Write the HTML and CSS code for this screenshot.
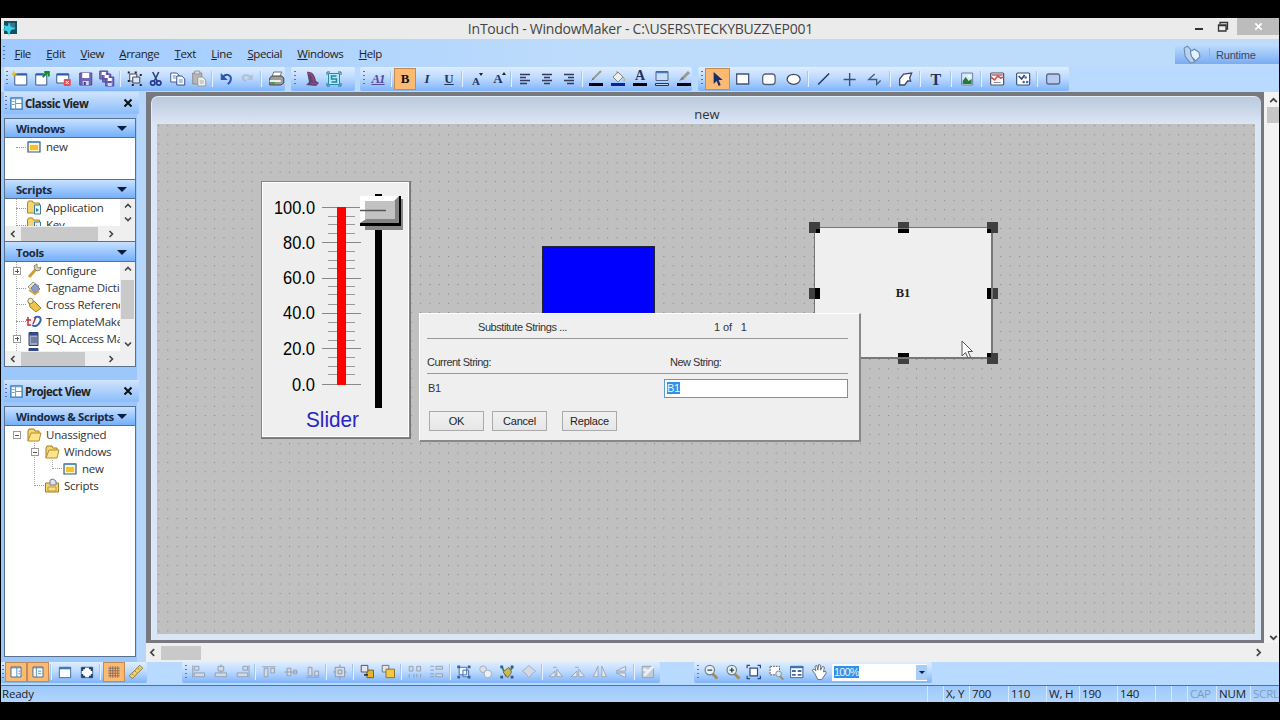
FILE: index.html
```
<!DOCTYPE html>
<html lang="en">
<head>
    <meta charset="UTF-8">
    <meta name="viewport" content="width=device-width, initial-scale=1.0">
    <title>InTouch - WindowMaker</title>
    <link rel="stylesheet" href="styles.css">
</head>
<body>
    <!-- icon set -->
    <svg class="sprite">
        <symbol id="win-new" viewBox="0 0 18 18"><path d="M3 4h12v11H3z" fill="#fff" stroke="#385a8c"/><path d="M3 4.500h12" stroke="#2a5ea8" stroke-width="2"/><path d="M2 0l1 3 3 1-3 1-1 3-1-3-2-1 2-1z" fill="#f0c020"/></symbol>
        <symbol id="win-open" viewBox="0 0 18 18"><path d="M2 4h11v11H2z" fill="#fff" stroke="#385a8c"/><path d="M2 4.500h8" stroke="#2a5ea8" stroke-width="2"/><path d="M9 7l5-5M10.500 2H15v4.500" fill="none" stroke="#188a28" stroke-width="2"/></symbol>
        <symbol id="win-close" viewBox="0 0 18 18"><path d="M2 4h12v9H2z" fill="#fff" stroke="#385a8c"/><path d="M2 4.500h12" stroke="#2a5ea8" stroke-width="2"/><rect x="9" y="9" width="7" height="7" rx="1" fill="#e0505a"/><path d="M11 11l3 3m0-3l-3 3" stroke="#fff"/></symbol>
        <symbol id="save" viewBox="0 0 18 18"><path d="M3 3h12v12H3z" fill="#7168b4" stroke="#4c4496"/><path d="M5.500 3h7v5h-7z" fill="#fff"/><path d="M6 11h6v4H6z" fill="#d4d4ee"/><path d="M7 12h2v3H7z" fill="#3b3484"/></symbol>
        <symbol id="save-all" viewBox="0 0 18 18"><g fill="#8078bc" stroke="#4c4496"><path d="M2 1h8v8H2zM5 4h8v8H5zM8 7h8v9H8z"/></g><path d="M4 2h4v3H4zM7 5h4v3H7zM10 8h4v3h-4z" fill="#fff"/><path d="M10 13h4v3h-4z" fill="#d8d4f2"/></symbol>
        <symbol id="duplicate" viewBox="0 0 18 18"><path d="M4 4h7v7H4z" fill="#fff" stroke="#445"/><path d="M7 7h7v6H7z" fill="#dce8fa" stroke="#445"/><path d="M2 2.500h2M9 2.500h2M2 11h2M14 5h2M6 15h2M14 15h2" stroke="#223" stroke-width="2"/></symbol>
        <symbol id="cut" viewBox="0 0 18 18"><path d="M6 2l5 10M12 2L7 12" stroke="#26407c" stroke-width="1.600"/><circle cx="6" cy="13" r="2.200" fill="none" stroke="#263c90" stroke-width="1.700"/><circle cx="12" cy="13" r="2.200" fill="none" stroke="#263c90" stroke-width="1.700"/></symbol>
        <symbol id="copy" viewBox="0 0 18 18"><path d="M2 3h6l2 2v7H2z" fill="#fff" stroke="#445c9c"/><path d="M8 6h5l3 3v6H8z" fill="#fff" stroke="#304c90"/><path d="M4 6h3M4 8h3M10 10h4M10 12h4" stroke="#6382bd"/></symbol>
        <symbol id="paste" viewBox="0 0 18 18"><path d="M3 3h9v11H3z" fill="#b8b7b8" stroke="#8c8b8c"/><path d="M5 1h5v3H5z" fill="#ddd" stroke="#999"/><path d="M8 7h5l3 3v6H8z" fill="#eee" stroke="#999"/><path d="M10 11h4M10 13h4" stroke="#aaa"/></symbol>
        <symbol id="undo" viewBox="0 0 18 18"><path d="M5 7c4-4 9-2 8 3-.4 2-1 3-3 4" fill="none" stroke="#2a58b0" stroke-width="2"/><path d="M3 3v7h7z" fill="#2a58b0"/></symbol>
        <symbol id="redo" viewBox="0 0 18 18"><path d="M12 7C8 4 4 5 4 8c.4 2 2 3 4 3" fill="none" stroke="#b3bfcf" stroke-width="2"/><path d="M14 4v6H8z" fill="#b3bfcf"/></symbol>
        <symbol id="print" viewBox="0 0 18 18"><path d="M5 7l2-5h8l-2 5z" fill="#fff" stroke="#777"/><path d="M3 8l2-2h10l2 2v5l-3 2H3z" fill="#9a9d98" stroke="#444"/><path d="M3 11h11" stroke="#eee" stroke-width="2"/><path d="M4 13h4" stroke="#40a040" stroke-width="2"/></symbol>
        <symbol id="wizard" viewBox="0 0 18 18"><path d="M4 2c5-1 8 3 9 9l3 2-3 3-10-1 3-3z" fill="#5b4578"/><path d="M5 3c4 0 5 4 6 9M8 13l6 1" stroke="#a84068" stroke-width="1.600" fill="none"/></symbol>
        <symbol id="symbol-s" viewBox="0 0 18 18"><path d="M3.500 3.500h11v11h-11z" fill="#b8e7f6" stroke="#268ba9"/><path d="M2 5V2h3M13 2h3v3M2 13v3h3M13 16h3v-3" fill="none" stroke="#24738e"/><path d="M11.500 6h-5v3h5v3h-5" fill="none" stroke="#2087a5" stroke-width="1.500"/></symbol>
        <symbol id="size-down" viewBox="0 0 18 18"><path d="M12 3h4l-2 3z" fill="#222"/></symbol>
        <symbol id="size-up" viewBox="0 0 18 18"><path d="M13 5l2-3 2 3z" fill="#222"/></symbol>
        <symbol id="al-left" viewBox="0 0 18 18"><path d="M4 4.500h10M4 7.500h6M4 10.500h10M4 13.500h7" stroke="#333b58" stroke-width="1.400"/></symbol>
        <symbol id="al-center" viewBox="0 0 18 18"><path d="M4 4.500h10M6 7.500h6M4 10.500h10M6 13.500h6" stroke="#333b58" stroke-width="1.400"/></symbol>
        <symbol id="al-right" viewBox="0 0 18 18"><path d="M4 4.500h10M8 7.500h6M4 10.500h10M7 13.500h7" stroke="#333b58" stroke-width="1.400"/></symbol>
        <symbol id="line-color" viewBox="0 0 18 18"><path d="M6 9l8-8" stroke="#9a9a92" stroke-width="2"/><path d="M4 11l2-3 1 1z" fill="#555"/><path d="M2 13h14v3H2z" fill="#000"/></symbol>
        <symbol id="fill-color" viewBox="0 0 18 18"><path d="M4 7l5-5 5 5-5 5z" fill="#eee" stroke="#898980"/><path d="M8 4V1M14 7c2 1 1 4 1 4" stroke="#a9a16b" fill="none"/><path d="M2 13h14v3H2z" fill="#0a22a8"/></symbol>
        <symbol id="bar-color" viewBox="0 0 18 18"><path d="M2 13h14v3H2z" fill="#000"/></symbol>
        <symbol id="window-color" viewBox="0 0 18 18"><path d="M3 1.500h12v9H3z" fill="#c7defa" stroke="#4b6387"/><path d="M3 2.500h12" stroke="#4e79b8" stroke-width="1.500"/><path d="M2.500 13.500h13v2h-13z" fill="#c0d4ee" stroke="#333"/></symbol>
        <symbol id="pen-color" viewBox="0 0 18 18"><path d="M7 9l7-7" stroke="#9b9c90" stroke-width="3"/><path d="M4 11l3-4 2 2z" fill="#777c70"/><path d="M2 13h14v3H2z" fill="#000"/></symbol>
        <symbol id="pointer" viewBox="0 0 18 18"><path d="M5 2v12l3-3 2 5 2-1-2-5h4z" fill="#192f69"/></symbol>
        <symbol id="rect" viewBox="0 0 18 18"><path d="M3 4h12v10H3z" fill="#fff" stroke="#455577" stroke-width="1.300"/></symbol>
        <symbol id="rrect" viewBox="0 0 18 18"><rect x="3" y="4" width="12.500" height="10.500" rx="3" fill="#fff" stroke="#586176" stroke-width="1.300"/></symbol>
        <symbol id="ellipse" viewBox="0 0 18 18"><ellipse cx="9" cy="9.300" rx="6.500" ry="5" fill="#fff" stroke="#404b67" stroke-width="1.300"/></symbol>
        <symbol id="line" viewBox="0 0 18 18"><path d="M3.500 14.500l11-11" stroke="#29385a" stroke-width="1.500"/></symbol>
        <symbol id="cross" viewBox="0 0 18 18"><path d="M3 9.500h12M9 3v13" stroke="#385075" stroke-width="1.400"/></symbol>
        <symbol id="polyline" viewBox="0 0 18 18"><path d="M9 4L3 9.500h8v5l4-4" fill="none" stroke="#405a80" stroke-width="1.300"/></symbol>
        <symbol id="polygon" viewBox="0 0 18 18"><path d="M3 9l4-5 8-1-2 5 1 3-3 0-3 4-5 0z" fill="#fff" stroke="#404b67" stroke-width="1.300"/></symbol>
        <symbol id="bitmap" viewBox="0 0 18 18"><path d="M4 3h11v12H4z" fill="#d5e9ff" stroke="#70809a"/><path d="M5 14v-3l3-4 3 4 3-2v5z" fill="#257a37"/><circle cx="11.500" cy="6" r="1.500" fill="#fff"/></symbol>
        <symbol id="trend" viewBox="0 0 18 18"><rect x="3" y="3" width="13" height="12" rx="1" fill="#fff" stroke="#4c5468" stroke-width="1.200"/><path d="M4 5h11" stroke="#b6656a" stroke-width="1.500"/><path d="M3 7l4 3 3-4 3 2 3-1" fill="none" stroke="#d04a50" stroke-width="1.600"/><path d="M6 12.500h7" stroke="#8b91a0"/></symbol>
        <symbol id="hist" viewBox="0 0 18 18"><rect x="3" y="3" width="13" height="12" rx="1" fill="#fff" stroke="#36557c" stroke-width="1.200"/><path d="M5 6l3 3 3-4" fill="none" stroke="#334874" stroke-width="1.700"/><circle cx="12" cy="7.500" r="1.300" fill="#3d6cad"/><circle cx="10" cy="12" r="1.300" fill="#3d6cad"/><circle cx="13.500" cy="12" r="1.300" fill="#3d6cad"/></symbol>
        <symbol id="button" viewBox="0 0 18 18"><rect x="3" y="4" width="13" height="10" rx="2" fill="#b6cbed" stroke="#596c8b" stroke-width="1.300"/></symbol>
        <symbol id="layout-l" viewBox="0 0 18 18"><path d="M3 3h12v12H3z" fill="#fff" stroke="#285b93"/><path d="M3 4h12M10 4v11M12 8h2M12 11h2" stroke="#397ebc"/></symbol>
        <symbol id="layout-h" viewBox="0 0 18 18"><path d="M3 3h12v12H3z" fill="#fff" stroke="#285b93"/><path d="M3 4h12M7 4v11M9 8h4M9 11h4" stroke="#397ebc"/></symbol>
        <symbol id="screen" viewBox="0 0 18 18"><path d="M3 4h12v11H3z" fill="#fff" stroke="#346c9c"/><path d="M3 5h12" stroke="#3874b8" stroke-width="2"/></symbol>
        <symbol id="full" viewBox="0 0 18 18"><path d="M3 4h12v11H3z" fill="#fff" stroke="#346c9c"/><path d="M3 4h4v2H5v2H3zM11 4h4v4h-2V6h-2zM3 11h2v2h2v2H3zM13 11h2v4h-4v-2h2z" fill="#263d63"/></symbol>
        <symbol id="grid" viewBox="0 0 18 18"><path d="M2 4.500h14M2 7.500h14M2 10.500h14M2 13.500h14M4.500 2v14M7.500 2v14M10.500 2v14M13.500 2v14" stroke="#7d6658"/></symbol>
        <symbol id="ruler" viewBox="0 0 18 18"><path d="M2 13L13 2l3 3L5 16z" fill="#eed56c" stroke="#8b7137"/><path d="M5 11l1.500 1.500M8 8l1.500 1.500M11 5l1.500 1.500" stroke="#8b7137"/></symbol>
        <symbol id="a-left" viewBox="0 0 18 18"><path d="M2.500 2v13M4 3h5v4H4zM4 10h11v4H4z" fill="#d4dae4" stroke="#909db2"/></symbol>
        <symbol id="a-center" viewBox="0 0 18 18"><path d="M6 3h6v5H6zM3 10h12v4H3zM9 1v2M9 8v2" fill="#d4dae4" stroke="#909db2"/></symbol>
        <symbol id="a-right" viewBox="0 0 18 18"><path d="M15.500 2v13M9 3h5v4H9zM3 10h11v4H3z" fill="#d4dae4" stroke="#909db2"/></symbol>
        <symbol id="a-top" viewBox="0 0 18 18"><path d="M2 3.500h14M4 5h4v9H4zM11 5h4v5h-4z" fill="#d4dae4" stroke="#909db2"/></symbol>
        <symbol id="a-mid" viewBox="0 0 18 18"><path d="M2 9h14M5 5h4v8H5zM12 7h3v4h-3z" fill="#d4dae4" stroke="#909db2"/></symbol>
        <symbol id="a-bottom" viewBox="0 0 18 18"><path d="M2 14.500h14M4 4h4v9H4zM11 8h4v5h-4z" fill="#d4dae4" stroke="#909db2"/></symbol>
        <symbol id="a-cross" viewBox="0 0 18 18"><path d="M4 4h10v10H4zM9 1v3M9 14v3M2 9h2M14 9h2M7 7h4v4H7z" fill="#d4dae4" stroke="#8995aa"/></symbol>
        <symbol id="send-back" viewBox="0 0 18 18"><path d="M9 7h7v8H9z" fill="#e7b52c" stroke="#725b26"/><path d="M3 2h7v7H3z" fill="#e5e6e9" stroke="#465268"/><path d="M6 12h4" stroke="#333" stroke-width="2"/></symbol>
        <symbol id="bring-front" viewBox="0 0 18 18"><path d="M3 2h7v7H3z" fill="#e5e6e9" stroke="#65738a"/><path d="M7 6h9v9H7z" fill="#f2c846" stroke="#8d6d24"/></symbol>
        <symbol id="space-h" viewBox="0 0 18 18"><path d="M3 3h4v5H3zM11 3h4v5h-4zM3 11v4M8 11v4M11 11v4M15 11v4" fill="#d4dae4" stroke="#909db2"/></symbol>
        <symbol id="space-v" viewBox="0 0 18 18"><path d="M8 3h7v3H8zM8 11h7v3H8zM2 3h4M2 7h4M2 11h4M2 14h4" fill="#d4dae4" stroke="#909db2"/></symbol>
        <symbol id="group" viewBox="0 0 18 18"><path d="M4 4h8v8H4zM8 7h6v7H8z" fill="#f0f7ff" stroke="#416ca8"/><path d="M2 2h3v3H2zM13 2h3v3h-3zM2 13h3v3H2zM13 13h3v3h-3z" fill="#3a639a"/></symbol>
        <symbol id="ungroup" viewBox="0 0 18 18"><circle cx="6" cy="6" r="3.500" fill="#dbe1e9" stroke="#a1acbc"/><circle cx="11" cy="11" r="4" fill="#edf0f4" stroke="#a1acbc"/></symbol>
        <symbol id="cell" viewBox="0 0 18 18"><path d="M4 4l4 9 7-9" fill="none" stroke="#408a46" stroke-width="2"/><path d="M5 9l6-5 3 5-4 6z" fill="#cdb75b" stroke="#6b6d4f"/><path d="M2 2h3v3H2zM13 2h3v3h-3zM2 13h3v3H2zM13 13h3v3h-3z" fill="#3a5686"/></symbol>
        <symbol id="uncell" viewBox="0 0 18 18"><path d="M9 2l3 3 4 3-4 3-3 4-3-4-4-3 4-3z" fill="#d3dae3" stroke="#a1acbc"/></symbol>
        <symbol id="rot-l" viewBox="0 0 18 18"><path d="M2 14h6V8zM10 14V6l6 8zM6 4h4" fill="#e4e8ed" stroke="#98a4b6"/></symbol>
        <symbol id="flip-h" viewBox="0 0 18 18"><path d="M2 14h5V3zM11 14V3l5 11z" fill="#e5e9ed" stroke="#98a4b6"/></symbol>
        <symbol id="flip-v" viewBox="0 0 18 18"><path d="M14 3v5H4zM4 10h10v5z" fill="#e4e8ed" stroke="#98a4b6"/></symbol>
        <symbol id="reshape" viewBox="0 0 18 18"><path d="M3 3h12v12H3z" fill="#c1cbd9" stroke="#93a0b2"/><path d="M5 13L15 3M4 6l5 2" stroke="#edf0f3" stroke-width="3"/></symbol>
        <symbol id="zoom-out" viewBox="0 0 18 18"><path d="M11 11l5 5" stroke="#a48d55" stroke-width="3"/><circle cx="8" cy="7" r="5" fill="#e5f2f7" stroke="#74838b" stroke-width="1.300"/><path d="M5.500 7h5" stroke="#344" stroke-width="1.500"/></symbol>
        <symbol id="zoom-in" viewBox="0 0 18 18"><path d="M11 11l5 5" stroke="#a48d55" stroke-width="3"/><circle cx="8" cy="7" r="5" fill="#e5f2f7" stroke="#74838b" stroke-width="1.300"/><path d="M5.500 7h5M8 4.500v5" stroke="#344" stroke-width="1.500"/></symbol>
        <symbol id="zoom-fit" viewBox="0 0 18 18"><path d="M5 5h8v8H5z" fill="#fff" stroke="#345179" stroke-width="1.300"/><path d="M2 5V2h3M13 2h3v3M2 13v3h3M13 16h3v-3" fill="none" stroke="#2b4c80" stroke-width="1.300"/></symbol>
        <symbol id="zoom-area" viewBox="0 0 18 18"><path d="M3 3h10v9H3z" fill="#fff" stroke="#555" stroke-dasharray="2 1"/><path d="M13 13l4 4" stroke="#a48d55" stroke-width="2"/><circle cx="12" cy="11" r="3" fill="#ddebf2" stroke="#788a94"/></symbol>
        <symbol id="panes" viewBox="0 0 18 18"><path d="M2.500 3h13v12h-13z" fill="#fff" stroke="#3f5b85"/><path d="M2 4h14" stroke="#3874b8" stroke-width="2"/><path d="M4 7h4v2H4zM10 7h4v2h-4zM4 11h4v2H4zM10 11h4v2h-4z" fill="#476ba1"/></symbol>
        <symbol id="hand" viewBox="0 0 18 18"><path d="M5 11L2 7l2-1 2 2-1-5 2-1 1 5 1-6 2 1v5l2-4 2 1-1 5 2-1 1 2-5 7H8z" fill="#fff" stroke="#686b71"/></symbol>
        <symbol id="folder" viewBox="0 0 16 16"><path d="M2 14V4l1-2h5l1 2h4v3" fill="#f4d66b" stroke="#a27b29"/><path d="M2 14l3-8h10l-2 8z" fill="#ffe58b" stroke="#b68a30"/></symbol>
        <symbol id="folder-s" viewBox="0 0 16 16"><path d="M1.500 5h13v9h-13z" fill="#f5d66c" stroke="#a27b29"/><path d="M6 5V2l3-1 3 2v4H6z" fill="#dce1f0" stroke="#7a7c90"/><path d="M4 9h8v4H4z" fill="#f6df87" stroke="#c39a3e"/></symbol>
        <symbol id="folder-app" viewBox="0 0 16 16"><path d="M1.500 3l1-2h4l1 2h6v10h-12z" fill="#f3d66f" stroke="#a98337"/><path d="M8.500 5h6v9h-6z" fill="#e8f6fb" stroke="#38799c"/><path d="M10 8l3 2-3 2z" fill="#2383a1"/></symbol>
        <symbol id="yellow-win" viewBox="0 0 16 16"><path d="M2 3h12v10H2z" fill="#fff4c6" stroke="#345b89" stroke-width="1.200"/><path d="M4 6h8v5H4z" fill="#f3c22c"/><path d="M2 3h12" stroke="#4a8bc6" stroke-width="1.500"/></symbol>
        <symbol id="wrench" viewBox="0 0 16 16"><path d="M3 14L11 5" stroke="#d19e31" stroke-width="3"/><path d="M9 6l-1-3 3-2v3l2 1 2-1-1 3-3 1z" fill="#ddd6bb" stroke="#8d8874"/></symbol>
        <symbol id="tags" viewBox="0 0 16 16"><path d="M2 7l5-5 6 4-5 6z" fill="#eee4a8" stroke="#9a9ba1"/><path d="M5 8l4-4 5 5-5 4z" fill="#8c9dcc" stroke="#747da5"/><path d="M3 10l6 4 4-3" fill="none" stroke="#d0a43d" stroke-width="2"/></symbol>
        <symbol id="crossref" viewBox="0 0 16 16"><path d="M3 6l5-2 7 7-5 4-6-5z" fill="#efc44a" stroke="#a37b26"/><circle cx="4.500" cy="4" r="2.700" fill="#f4efbf" stroke="#888556"/></symbol>
        <symbol id="template" viewBox="0 0 16 16"><path d="M8 4c5-3 8 0 6 4s-5 5-8 3" fill="none" stroke="#3665b8" stroke-width="2"/><path d="M2 3v8h3M0 6h5M10 3L7 10" fill="none" stroke="#c72c37" stroke-width="1.500"/></symbol>
        <symbol id="sql" viewBox="0 0 16 16"><path d="M3 1.500h9v13H3z" fill="#9ba8c7" stroke="#34405e"/><path d="M3 3h9" stroke="#304a95" stroke-width="3"/><path d="M5 7h6M5 9h6M5 11h6" stroke="#465575"/></symbol>
        <symbol id="project" viewBox="0 0 16 16"><path d="M2 2h12v12H2z" fill="#fff" stroke="#347ab8" stroke-width="1.400"/><path d="M2 3h12M7 3v11M7 8h7M3 6h3M3 9h3" stroke="#5799d0"/></symbol>
        <symbol id="runtime" viewBox="0 0 18 18"><path d="M2 3l3-2 3 3 1 6 3 6-4 1-5-6z" fill="#b5d2f2" stroke="#6f88ad"/><path d="M8 6l4-2 4 3 1 4-4 4-4-4z" fill="#e3f0ff" stroke="#6a84aa"/></symbol>
        <symbol id="up" viewBox="0 0 10 10"><path d="M2 6.500l3-3 3 3" fill="none" stroke="#444" stroke-width="1.600"/></symbol>
        <symbol id="down" viewBox="0 0 10 10"><path d="M2 3.500l3 3 3-3" fill="none" stroke="#444" stroke-width="1.600"/></symbol>
        <symbol id="left" viewBox="0 0 10 10"><path d="M6.500 2l-3 3 3 3" fill="none" stroke="#444" stroke-width="1.600"/></symbol>
        <symbol id="right" viewBox="0 0 10 10"><path d="M3.500 2l3 3-3 3" fill="none" stroke="#444" stroke-width="1.600"/></symbol>
        <symbol id="close" viewBox="0 0 10 10"><path d="M1.500 1.500l7 7m0-7l-7 7" stroke="currentColor" stroke-width="2"/></symbol>
    </svg>

    <div class="app">
        <header class="titlebar">
            <svg class="app-icon" viewBox="0 0 16 16"><path d="M2 1h13v13H2z" fill="#174e60"/><path d="M6 3h7v7H6z" fill="#35788a"/><path d="M1 5l5 1 1-4 2 5 5 1-5 2-2 6-2-5-5-1 3-2z" fill="#39d1e6"/></svg>
            <h1>InTouch - WindowMaker - C:\USERS\TECKYBUZZ\EP001</h1>
            <div class="win-buttons">
                <span class="minimize"></span>
                <svg class="restore" viewBox="0 0 12 12"><path d="M3 3V1.500h7.500V8H9M1.500 4H9v6H1.500zM1.500 4.500H9" fill="none" stroke="#333" stroke-width="1.300"/></svg>
                <span class="win-close"><svg width="9" height="9"><use href="#close"/></svg></span>
            </div>
        </header>

        <div class="menu-row">
            <nav class="menu">
                <i class="grip"></i>
                <span><u>F</u>ile</span><span><u>E</u>dit</span><span><u>V</u>iew</span><span><u>A</u>rrange</span><span><u>T</u>ext</span><span><u>L</u>ine</span><span><u>S</u>pecial</span><span><u>W</u>indows</span><span><u>H</u>elp</span>
            </nav>
            <div class="runtime"><svg width="19" height="19"><use href="#runtime"/></svg><b></b><span>Runtime</span></div>
        </div>

        <div class="tool-row">
            <div class="bar bar-file">
                <i class="grip"></i>
                <svg><use href="#win-new"/></svg><svg><use href="#win-open"/></svg><svg><use href="#win-close"/></svg><svg><use href="#save"/></svg><svg><use href="#save-all"/></svg>
                <i class="sep"></i>
                <svg><use href="#duplicate"/></svg><svg><use href="#cut"/></svg><svg><use href="#copy"/></svg><svg><use href="#paste"/></svg>
                <i class="sep"></i>
                <svg><use href="#undo"/></svg><svg><use href="#redo"/></svg>
                <i class="sep"></i>
                <svg><use href="#print"/></svg>
            </div>
            <div class="bar bar-wizard">
                <i class="grip"></i>
                <svg><use href="#wizard"/></svg><svg><use href="#symbol-s"/></svg>
            </div>
            <div class="bar bar-format">
                <i class="grip"></i>
                <span class="letter font-btn">A1</span>
                <i class="sep"></i>
                <span class="letter active">B</span><span class="letter italic">I</span><span class="letter underline">U</span>
                <i class="sep"></i>
                <span class="letter small">A<svg><use href="#size-down"/></svg></span><span class="letter big">A<svg><use href="#size-up"/></svg></span>
                <i class="sep"></i>
                <svg><use href="#al-left"/></svg><svg><use href="#al-center"/></svg><svg><use href="#al-right"/></svg>
                <i class="sep"></i>
                <svg><use href="#line-color"/></svg><svg><use href="#fill-color"/></svg><span class="letter text-color">A<svg><use href="#bar-color"/></svg></span><svg><use href="#window-color"/></svg><svg><use href="#pen-color"/></svg>
            </div>
            <div class="bar bar-draw">
                <i class="grip"></i>
                <svg class="active"><use href="#pointer"/></svg><svg><use href="#rect"/></svg><svg><use href="#rrect"/></svg><svg><use href="#ellipse"/></svg>
                <i class="sep"></i>
                <svg><use href="#line"/></svg><svg><use href="#cross"/></svg><svg><use href="#polyline"/></svg>
                <i class="sep"></i>
                <svg><use href="#polygon"/></svg>
                <i class="sep"></i>
                <span class="letter text-tool">T</span>
                <i class="sep"></i>
                <svg><use href="#bitmap"/></svg>
                <i class="sep"></i>
                <svg><use href="#trend"/></svg><svg><use href="#hist"/></svg>
                <i class="sep"></i>
                <svg><use href="#button"/></svg>
            </div>
        </div>

        <main class="workspace">
            <aside class="sidebar">
                <div class="pane-title"><i class="grip"></i><svg><use href="#project"/></svg><h2>Classic View</h2><svg class="x"><use href="#close"/></svg></div>
                <section class="pane pane-windows">
                    <h3>Windows<i class="caret"></i></h3>
                    <ul class="tree">
                        <li><i class="dots"></i><svg><use href="#yellow-win"/></svg>new</li>
                    </ul>
                </section>
                <section class="pane pane-scripts">
                    <h3>Scripts<i class="caret"></i></h3>
                    <div class="pane-body">
                        <ul class="tree lined">
                            <li><i class="dots"></i><svg><use href="#folder-app"/></svg>Application</li>
                            <li><i class="dots"></i><svg><use href="#folder-app"/></svg>Key</li>
                        </ul>
                        <div class="vscroll"><svg><use href="#up"/></svg><svg><use href="#down"/></svg></div>
                    </div>
                    <div class="hscroll"><svg><use href="#left"/></svg><b></b><svg><use href="#right"/></svg></div>
                </section>
                <section class="pane pane-tools">
                    <h3>Tools<i class="caret"></i></h3>
                    <div class="pane-body">
                        <ul class="tree lined">
                            <li><i class="box plus"></i><svg><use href="#wrench"/></svg>Configure</li>
                            <li><i class="dots"></i><svg><use href="#tags"/></svg>Tagname Dictionary</li>
                            <li><i class="dots"></i><svg><use href="#crossref"/></svg>Cross Reference</li>
                            <li><i class="dots"></i><svg><use href="#template"/></svg>TemplateMaker</li>
                            <li><i class="box plus"></i><svg><use href="#sql"/></svg>SQL Access Manager</li>
                            <li><i class="dots"></i><svg><use href="#sql"/></svg></li>
                        </ul>
                        <div class="vscroll"><svg><use href="#up"/></svg><b></b><svg><use href="#down"/></svg></div>
                    </div>
                    <div class="hscroll"><svg><use href="#left"/></svg><b></b><svg><use href="#right"/></svg></div>
                </section>

                <div class="pane-title project-title"><i class="grip"></i><svg><use href="#project"/></svg><h2>Project View</h2><svg class="x"><use href="#close"/></svg></div>
                <section class="pane pane-project">
                    <h3>Windows &amp; Scripts<i class="caret"></i></h3>
                    <ul class="tree">
                        <li><i class="box"></i><svg><use href="#folder"/></svg>Unassigned</li>
                        <li class="level2"><i class="box"></i><svg><use href="#folder"/></svg>Windows</li>
                        <li class="level3"><i class="dots"></i><svg><use href="#yellow-win"/></svg>new</li>
                        <li class="level2"><i class="dots"></i><svg><use href="#folder-s"/></svg>Scripts</li>
                    </ul>
                </section>
            </aside>

            <div class="editor">
                <div class="frame">
                    <div class="window">
                        <h2>new</h2>
                        <div class="canvas">
                            <svg class="slider" viewBox="0 0 150 258">
                                <rect width="150" height="258" fill="#777"/>
                                <path d="M0 0h149v257H0z" fill="#858585"/>
                                <path d="M1 1h147v255H1z" fill="#fff"/>
                                <path d="M2 2h145v253H2z" fill="#efefef"/>
                                <g>
                                    <text x="13" y="33" textLength="41" lengthAdjust="spacingAndGlyphs">100.0</text>
                                    <text x="22" y="68" textLength="32" lengthAdjust="spacingAndGlyphs">80.0</text>
                                    <text x="22" y="103" textLength="32" lengthAdjust="spacingAndGlyphs">60.0</text>
                                    <text x="22" y="138" textLength="32" lengthAdjust="spacingAndGlyphs">40.0</text>
                                    <text x="22" y="174" textLength="32" lengthAdjust="spacingAndGlyphs">20.0</text>
                                    <text x="31" y="210" textLength="23" lengthAdjust="spacingAndGlyphs">0.0</text>
                                </g>
                                <path d="M61 26.500h39M61 61.500h39M61 97.500h39M61 132.500h39M61 167.500h39M61 203.500h39" stroke="#888"/>
                                <path d="M67 35.500h27M67 43.500h27M67 52.500h27M67 70.500h27M67 79.500h27M67 87.500h27M67 105.500h27M67 113.500h27M67 123.500h27M67 141.500h27M67 150.500h27M67 159.500h27M67 176.500h27M67 185.500h27M67 193.500h27" stroke="#999"/>
                                <path d="M76 26h9v178h-9z" fill="#f00"/>
                                <path d="M114 13h7v214h-7z" fill="#000"/>
                                <path d="M104 18h38v31h-38z" fill="#888"/>
                                <path d="M99 15h41v30H99z" fill="#000"/>
                                <path d="M99 15h39v27H99z" fill="#fff"/>
                                <path d="M138 15v27H99l6-4h28V20z" fill="#838383"/>
                                <path d="M104 20h30v18h-30z" fill="#c2c2c2"/>
                                <path d="M99 29.500h26" stroke="#555" stroke-width="1.500"/>
                                <text class="slider-name" x="45" y="246" textLength="53" lengthAdjust="spacingAndGlyphs">Slider</text>
                            </svg>
                            <div class="blue-box"></div>
                            <div class="push-button">
                                B1
                                <i class="handle nw"></i><i class="handle n"></i><i class="handle ne"></i>
                                <i class="handle w"></i><i class="handle e"></i>
                                <i class="handle s"></i><i class="handle se"></i>
                            </div>
                            <form class="dialog">
                                <div class="dialog-head"><span>Substitute Strings ...</span><span>1 of &nbsp; 1</span></div>
                                <div class="dialog-labels"><label>Current String:</label><label>New String:</label></div>
                                <div class="dialog-values"><span>B1</span><div class="field"><mark>B1</mark></div></div>
                                <div class="dialog-buttons"><button type="button">OK</button><button type="button">Cancel</button><button type="button">Replace</button></div>
                            </form>
                            <svg class="cursor" viewBox="0 0 12 18"><path d="M1 1v15l3.500-3.500L7 18l2.500-1L7 11.500h4.500z" fill="#fff" stroke="#555"/></svg>
                        </div>
                    </div>
                </div>
                <div class="editor-vscroll"><svg><use href="#up"/></svg><b></b><svg><use href="#down"/></svg></div>
                <div class="editor-hscroll"><svg><use href="#left"/></svg><b></b><svg><use href="#right"/></svg></div>
            </div>
        </main>

        <div class="bottom-row">
            <div class="bar bar-view">
                <i class="grip"></i>
                <svg class="active"><use href="#layout-l"/></svg><svg class="active"><use href="#layout-h"/></svg>
                <i class="sep"></i>
                <svg><use href="#screen"/></svg><svg><use href="#full"/></svg>
                <i class="sep"></i>
                <svg class="active"><use href="#grid"/></svg><svg><use href="#ruler"/></svg>
            </div>
            <div class="bar bar-arrange">
                <i class="grip"></i>
                <svg><use href="#a-left"/></svg><svg><use href="#a-center"/></svg><svg><use href="#a-right"/></svg>
                <i class="sep"></i>
                <svg><use href="#a-top"/></svg><svg><use href="#a-mid"/></svg><svg><use href="#a-bottom"/></svg>
                <i class="sep"></i>
                <svg><use href="#a-cross"/></svg>
                <i class="sep"></i>
                <svg><use href="#send-back"/></svg><svg><use href="#bring-front"/></svg>
                <i class="sep"></i>
                <svg><use href="#space-h"/></svg><svg><use href="#space-v"/></svg>
                <i class="sep"></i>
                <svg><use href="#group"/></svg><svg><use href="#ungroup"/></svg><svg><use href="#cell"/></svg><svg><use href="#uncell"/></svg>
                <i class="sep"></i>
                <svg><use href="#rot-l"/></svg><svg><use href="#rot-l"/></svg><svg><use href="#flip-h"/></svg><svg><use href="#flip-v"/></svg>
                <i class="sep"></i>
                <svg><use href="#reshape"/></svg>
            </div>
            <div class="bar bar-zoom">
                <i class="grip"></i>
                <svg><use href="#zoom-out"/></svg><svg><use href="#zoom-in"/></svg><svg><use href="#zoom-fit"/></svg><svg><use href="#zoom-area"/></svg><svg><use href="#panes"/></svg><svg><use href="#hand"/></svg>
                <div class="zoom-select"><mark>100%</mark><b><i class="caret"></i></b></div>
            </div>
        </div>

        <footer class="status">
            <span class="ready">Ready</span>
            <span></span><span>X, Y</span><span>700</span><span>110</span><span>W, H</span><span>190</span><span>140</span><span></span><span></span><span class="off">CAP</span><span>NUM</span><span class="off">SCRL</span>
        </footer>
    </div>
</body>
</html>
```
FILE: styles.css
```
* {
    box-sizing: border-box;
}
body {
    margin: 0;
    height: 720px;
    padding: 18px 1px 0;
    overflow: hidden;
    background: #000;
    color: #222;
    font-family: "Open Sans", "Noto Sans", sans-serif;
    font-size: 11.5px;
}
h1, h2, h3, ul {
    margin: 0;
    padding: 0;
    font-weight: normal;
    list-style: none;
}
i {
    font-style: normal;
}
svg {
    display: block;
    flex: none;
}
mark {
    background: #3390e8;
    color: #e8f4ff;
}
.sprite {
    position: absolute;
    width: 0;
    height: 0;
}
.app {
    display: flex;
    flex-direction: column;
    height: 684px;
    background: #bddcfc;
}

/* title bar and menu */
.titlebar {
    display: grid;
    grid-template-columns: 180px 1fr 180px;
    height: 21px;
    background: #ebebeb;
}
.app-icon {
    width: 16px;
    height: 16px;
    margin: 2px 0 0 1px;
}
.titlebar h1 {
    padding-left: 1px;
    font-size: 14px;
    line-height: 22px;
    text-align: center;
    color: #444;
    letter-spacing: -0.23px;
    white-space: nowrap;
}
.win-buttons {
    display: flex;
    justify-content: flex-end;
}
.minimize {
    width: 8px;
    height: 2px;
    margin: 10px 14px 0 0;
    background: #333;
}
.restore {
    width: 12px;
    height: 12px;
    margin: 3px 8px 0 0;
}
.win-close {
    display: flex;
    align-items: center;
    justify-content: center;
    width: 42px;
    height: 17px;
    color: #fff;
    background: #bcbcbc;
}
.menu-row {
    display: flex;
    justify-content: space-between;
    height: 28px;
    background: linear-gradient(90deg, #9fc9ff, #bddcfc 45%);
}
.menu {
    display: flex;
    align-items: center;
    gap: 15.400px;
    padding-top: 1px;
    letter-spacing: -0.420px;
}
.grip {
    flex: none;
    width: 3px;
    height: 15px;
    background: repeating-linear-gradient(#5277b0 0 1.500px, transparent 1.500px 4px);
    background-size: 2px 100%;
    background-repeat: no-repeat;
}
.menu .grip {
    width: 2px;
    margin: 0 -6px 0 2px;
}
.menu u {
    text-underline-offset: 1px;
}
.runtime {
    display: flex;
    align-items: center;
    width: 104px;
    height: 19px;
    margin-top: 6px;
    padding-left: 7px;
    background: linear-gradient(#bddcfc, #7aabf3);
    font: 11px "Liberation Sans", sans-serif;
    letter-spacing: -0.2px;
    color: #36496c;
}
.runtime b {
    width: 1px;
    height: 14px;
    margin: 0 6px 0 8px;
    background: #8eb3e8;
}

/* toolbars */
.tool-row, .bottom-row {
    display: flex;
    background: #b8dafe;
}
.tool-row {
    height: 25px;
    align-items: flex-start;
}
.bar {
    --slot: 22px;
    --gap: 5px;
    display: flex;
    align-items: center;
    height: 24px;
    padding-bottom: 1px;
    border-radius: 2px;
    background: linear-gradient(#deedff, #bddafe 45%, #7fb4fb);
}
.bar > svg, .letter {
    width: var(--slot);
    height: 22px;
    padding: 2px 0;
}
.bar > .sep {
    flex: none;
    width: 1px;
    height: 16px;
    margin: 0 calc((var(--gap) - 1px) / 2);
    background: #e4f1ff;
    box-shadow: -1px 0 #a5c6f3;
}
.bar > .grip {
    margin: 0 1px 0 3px;
}
.bar .active {
    background: #fcb972;
    border: 1px solid #c38b54;
    padding: 1px 0;
}
.bar-file {
    --slot: 21.5px;
    --gap: 6px;
    width: 281px;
    margin-left: 3px;
}
.bar-file .grip {
    margin-left: 2px;
}
.bar-wizard {
    width: 64px;
    margin-left: 6px;
}
.bar-wizard .grip {
    margin-right: 4px;
}
.bar-format {
    --gap: 5px;
    width: 332px;
    margin-left: 5px;
}
.bar-format .grip {
    margin: 0 1px 0 3px;
}
.bar-draw {
    --slot: 25.300px;
    --gap: 5.300px;
    width: 371px;
    margin-left: 6px;
}
.bar-draw > .grip {
    margin-right: 1px;
}
.letter {
    display: flex;
    flex: none;
    align-items: center;
    justify-content: center;
    position: relative;
    font: bold 13px "Liberation Serif", serif;
    color: #233459;
}
.letter svg {
    position: absolute;
    inset: 2px 2px;
    width: 18px;
    height: 18px;
}
.letter.active {
    color: #111;
}
.font-btn {
    color: #5a4a9b;
    font-style: italic;
    text-decoration: underline;
    letter-spacing: -1px;
}
.italic {
    font-style: italic;
}
.underline {
    text-decoration: underline;
}
.small {
    padding-top: 6px;
    font-size: 11px;
}
.text-color {
    padding-bottom: 7px;
    font-size: 14px;
}
.text-tool {
    padding-top: 4px;
    font-size: 16px;
}

/* docked panes */
.workspace {
    display: flex;
    height: 570px;
}
.sidebar {
    width: 145px;
    padding: 0 0 0 3px;
    background: linear-gradient(90deg, #9cc7fb 0 136px, #b7d6fc 136px);
}
.pane-title {
    display: flex;
    align-items: center;
    width: 135px;
    height: 22px;
    background: linear-gradient(#cfe4fe, #8cbcfa);
}
.pane-title .grip {
    width: 2px;
    margin: 0 2px 0 1px;
}
.pane-title svg {
    width: 15px;
    height: 15px;
}
.pane-title h2 {
    flex: 1;
    padding-left: 1px;
    font-size: 11.500px;
    font-weight: bold;
    letter-spacing: -0.5px;
}
.pane-title .x {
    width: 10px;
    height: 10px;
    margin-right: 6px;
    color: #111;
}
.pane {
    display: flex;
    flex-direction: column;
    width: 132px;
    border: 1px solid #59718f;
    border-top-width: 0;
    background: #fff;
}
.pane h3 {
    display: flex;
    flex: none;
    align-items: center;
    justify-content: space-between;
    height: 19px;
    padding: 0 8px 0 11px;
    border-bottom: 1px solid #59718f;
    background: linear-gradient(#c8e1ff, #74affa);
    font-size: 11.300px;
    font-weight: bold;
    color: #1c2940;
    letter-spacing: -0.35px;
    white-space: nowrap;
}
.caret {
    border: 5px solid transparent;
    border-top: 5px solid #0b1c3c;
    border-bottom: 0;
}
.pane-windows {
    height: 62px;
    margin-top: 4px;
    border-top-width: 1px;
}
.pane-scripts {
    height: 62px;
}
.pane-tools {
    height: 125px;
}
.pane-tools h3 {
    height: 20px;
    padding-top: 1px;
}
.pane-project {
    height: 251px;
    margin-top: 3px;
    border-top-width: 1px;
}
.project-title {
    margin-top: 13px;
    margin-bottom: 4px;
}
.tree {
    flex: 1;
    min-width: 0;
    padding-top: 1px;
    overflow: hidden;
    color: #333;
    letter-spacing: -0.22px;
}
.tree li {
    display: flex;
    align-items: center;
    height: 16.800px;
    padding-left: 11px;
    line-height: 16px;
    white-space: nowrap;
}
.tree svg {
    width: 16px;
    height: 16px;
    margin-right: 4px;
}
.dots {
    flex: none;
    width: 10px;
    border-top: 1px dotted #999;
}
.lined {
    background: repeating-linear-gradient(#aaa 0 1px, transparent 1px 2px) 11px 0 / 1px 100% no-repeat;
}
.box {
    flex: none;
    width: 8px;
    height: 8px;
    margin: 0 5px 0 -3px;
    border: 1px solid #999;
    background: linear-gradient(#555, #555) center / 4px 1px no-repeat #fff;
}
.plus {
    background: linear-gradient(#555, #555) center / 4px 1px no-repeat, linear-gradient(#555, #555) center / 1px 4px no-repeat #fff;
}
.pane-project .level2 {
    padding-left: 29px;
}
.pane-project .level3 {
    padding-left: 47px;
}
.pane-project .tree {
    background: repeating-linear-gradient(#aaa 0 1px, transparent 1px 2px) 29px 17px / 1px 43px no-repeat,
        repeating-linear-gradient(#aaa 0 1px, transparent 1px 2px) 47px 34px / 1px 9px no-repeat;
}
.pane-body {
    display: flex;
    flex: 1;
    min-height: 0;
}
.vscroll {
    display: flex;
    flex-direction: column;
    align-items: center;
    justify-content: space-between;
    width: 15px;
    padding: 2px 0;
    background: #efefef;
}
.vscroll svg, .hscroll svg {
    width: 10px;
    height: 10px;
}
.vscroll b {
    width: 13px;
    height: 39px;
    margin-bottom: 14px;
    background: #c9c9c9;
}
.hscroll {
    display: flex;
    flex: none;
    align-items: center;
    height: 15px;
    padding: 0 19px 0 3px;
    background: #efefef;
}
.hscroll b {
    width: 77px;
    height: 14px;
    margin-left: 3px;
    background: #c9c9c9;
}
.hscroll svg:last-child {
    margin-left: auto;
}
.pane-tools .hscroll b {
    width: 64px;
}

/* drawing window */
.editor {
    display: grid;
    grid-template: 551px 19px / 1118px 15px;
    width: 1133px;
    background: #efefef;
}
.frame {
    padding: 4px 3px 3px 5px;
    background: #77797e;
}
.window {
    display: flex;
    flex-direction: column;
    height: 544px;
    padding: 0 6px 6px 5px;
    border: 1px solid #e4ecf8;
    border-width: 1px 0 0 1px;
    border-radius: 7px 7px 0 0;
    background: linear-gradient(#bac9dc, #dbe6f5 27px);
}
.window h2 {
    height: 27px;
    padding: 1px 0 0 2px;
    font-size: 13px;
    line-height: 33px;
    text-align: center;
    color: #333;
}
.canvas {
    position: relative;
    flex: 1;
    background-color: #c0c0c0;
    background-image: radial-gradient(circle at 1.500px 1.500px, #858585 0.500px, transparent 0.900px);
    background-size: 9.370px 9.370px;
}
.editor-vscroll {
    display: flex;
    flex-direction: column;
    align-items: center;
    padding: 3px 0 0 3px;
    background: #f3f3f3;
}
.editor-vscroll svg, .editor-hscroll svg {
    width: 11px;
    height: 11px;
}
.editor-vscroll b {
    width: 12px;
    height: 16px;
    margin-top: 1px;
    background: #c6c6c6;
}
.editor-vscroll svg:last-child {
    margin-top: auto;
}
.editor-hscroll {
    display: flex;
    align-items: center;
}
.editor-hscroll b {
    width: 40px;
    height: 14px;
    margin-left: 3px;
    background: #c9c9c9;
}
.editor-hscroll svg:first-child {
    margin-left: 1px;
}
.editor-hscroll svg:last-child {
    margin-left: auto;
}

/* objects placed on the canvas */
.slider {
    position: absolute;
    left: 104px;
    top: 57px;
    width: 150px;
    height: 258px;
}
.slider text {
    font: 19px "Liberation Sans", sans-serif;
}
.slider .slider-name {
    font-size: 21.500px;
    fill: #2926c4;
}
.blue-box {
    position: absolute;
    left: 385px;
    top: 122px;
    width: 113px;
    height: 70px;
    border: 1px solid #223;
    background: #00f;
}
.push-button {
    position: absolute;
    left: 657px;
    top: 103px;
    width: 179px;
    height: 132px;
    border: 1px solid #777;
    border-right-width: 2px;
    border-bottom-width: 2px;
    background: #efefef;
    font: bold 12.500px/131px "Liberation Serif", serif;
    text-align: center;
}
.handle {
    position: absolute;
    width: 11px;
    height: 11px;
    background: #404040;
}
.nw, .n, .ne {
    top: -6px;
}
.w, .e {
    top: 60px;
}
.s, .se {
    bottom: -7px;
}
.nw, .w {
    left: -6px;
}
.n, .s {
    left: 83px;
}
.ne, .e, .se {
    right: -7px;
}
.n {
    background: linear-gradient(#404040 6px, #777 6px 7px, #000 7px);
}
.s {
    background: linear-gradient(#000 4px, #777 4px 6px, #404040 6px);
}
.nw {
    background: linear-gradient(#000, #000) 7px 7px / 4px 4px no-repeat #404040;
}
.ne {
    background: linear-gradient(#000, #000) 0 7px / 4px 4px no-repeat #404040;
}
.se {
    background: linear-gradient(#000, #000) 0 0 / 4px 4px no-repeat #404040;
}
.w {
    background: linear-gradient(90deg, #404040 6px, #000 6px);
}
.e {
    background: linear-gradient(90deg, #000 4px, #777 4px 6px, #404040 6px);
}
.dialog {
    position: absolute;
    left: 262px;
    top: 189px;
    width: 442px;
    height: 129px;
    padding: 1px 11px 0 7px;
    border: 1px solid #fff;
    border-right: 2px solid #888;
    border-bottom: 2px solid #888;
    background: #efefef;
    font: 11px "Liberation Sans", sans-serif;
    letter-spacing: -0.430px;
    color: #333;
}
.dialog-head, .dialog-labels, .dialog-values {
    display: grid;
    grid-template-columns: 243px 1fr;
    align-items: center;
}
.dialog-head {
    height: 24px;
    border-bottom: 1px solid #999;
}
.dialog-head span:first-child {
    padding-left: 51px;
}
.dialog-head span:last-child {
    padding-left: 44px;
    letter-spacing: -0.1px;
}
.dialog-labels {
    height: 35px;
    padding-top: 12px;
    border-bottom: 1px solid #999;
    letter-spacing: -0.500px;
}
.dialog-values {
    grid-template-columns: 237px 1fr;
    height: 29px;
}
.dialog-values span {
    padding: 0 0 2px 1px;
}
.field {
    height: 19px;
    padding: 2px 2px;
    border: 1px solid #559bd2;
    background: #fff;
    line-height: 13px;
}
.dialog-buttons {
    display: flex;
    padding: 8px 0 0 2px;
}
.dialog button {
    width: 55px;
    height: 20px;
    margin-right: 8px;
    padding: 0;
    border: 1px solid #aaa;
    background: linear-gradient(#f1f1f1, #e6e6e6);
    color: #222;
    font: inherit;
    letter-spacing: -0.2px;
}
.dialog button:nth-child(2) {
    margin-right: 15px;
}
.cursor {
    position: absolute;
    left: 804px;
    top: 216px;
    width: 12px;
    height: 18px;
}

/* bottom toolbars and status bar */
.bottom-row {
    height: 23px;
    align-items: flex-start;
}
.bottom-row .bar {
    height: 21px;
}
.bottom-row .bar > svg {
    height: 20px;
    padding: 1.500px 0;
}
.bar-view {
    width: 146px;
}
.bar-view > .grip {
    margin: 0 0 0 1px;
}
.bar-arrange {
    --slot: 21.800px;
    --gap: 5px;
    width: 478px;
    margin-left: 35px;
}
.bar-arrange > .grip {
    margin-right: 0;
}
.bar-zoom {
    --slot: 21.500px;
    width: 238px;
    margin-left: 34px;
}
.bar-zoom > .grip {
    margin-right: 0;
}
.zoom-select {
    display: flex;
    align-items: center;
    justify-content: space-between;
    width: 95px;
    height: 17px;
    margin-left: 3px;
    padding-left: 2px;
    background: #fff;
    font: 11px "Liberation Sans", sans-serif;
}
.zoom-select mark {
    letter-spacing: -0.9px;
}
.zoom-select b {
    display: flex;
    align-items: center;
    justify-content: center;
    width: 11px;
    height: 15px;
    background: #a8cdf8;
}
.zoom-select .caret {
    border-width: 3px 3px 0;
}
.status {
    display: grid;
    grid-template-columns: 926px 16px 26px 39px 38px 33px 38px 38px 16px 16px 29px 34px 29px;
    height: 17px;
    border-top: 1px solid #52729d;
    background: linear-gradient(#9dc8fb, #b2d5fd);
    line-height: 16px;
    letter-spacing: -0.2px;
}
.status span {
    padding-left: 2px;
    overflow: hidden;
    white-space: nowrap;
    border-left: 1px solid #d5e8fe;
}
.status .ready {
    padding-left: 1px;
    border-left: 0;
}
.status .off {
    color: #7f9dc2;
}
```
